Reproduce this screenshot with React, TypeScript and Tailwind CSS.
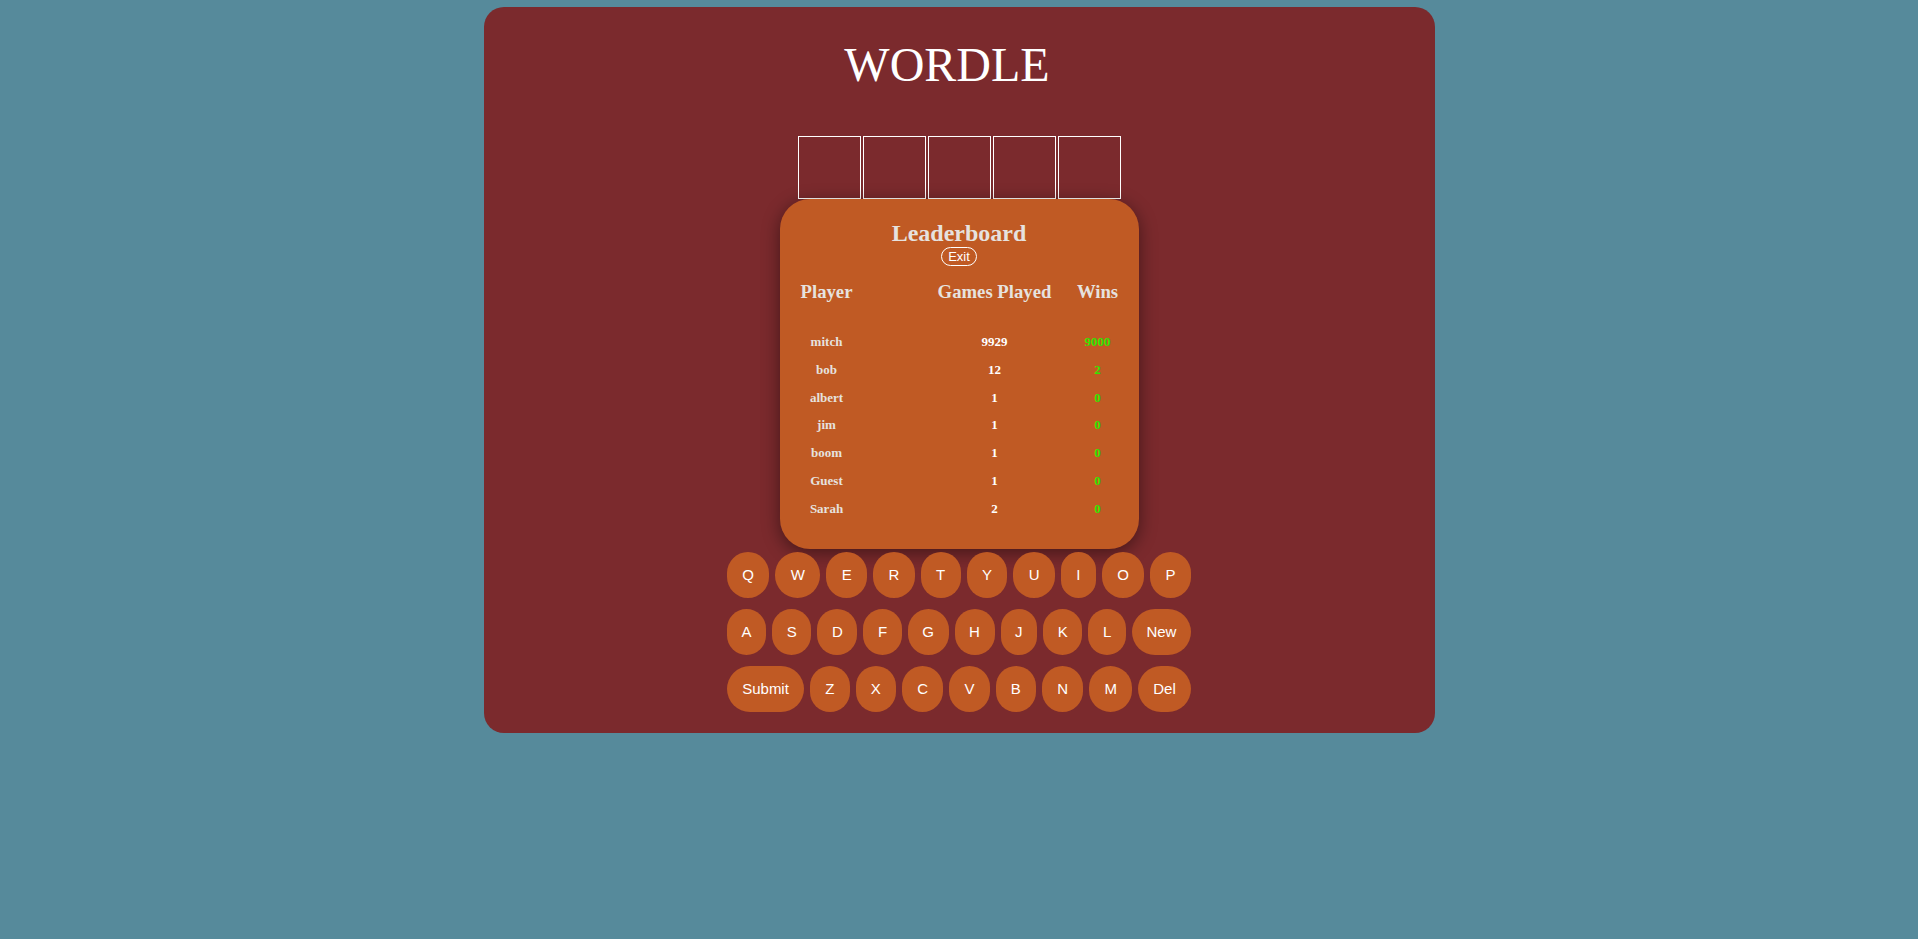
const rows = [
  { name: "mitch", games: 9929, wins: 9000 },
  { name: "bob", games: 12, wins: 2 },
  { name: "albert", games: 1, wins: 0 },
  { name: "jim", games: 1, wins: 0 },
  { name: "boom", games: 1, wins: 0 },
  { name: "Guest", games: 1, wins: 0 },
  { name: "Sarah", games: 2, wins: 0 },
];

const keyRows = [
  ["Q", "W", "E", "R", "T", "Y", "U", "I", "O", "P"],
  ["A", "S", "D", "F", "G", "H", "J", "K", "L", "New"],
  ["Submit", "Z", "X", "C", "V", "B", "N", "M", "Del"],
];

function Leaderboard() {
  return (
    <div className="w-[359px] h-[350px] rounded-[30px] bg-[#c05a24] text-[#e6e2df] shadow-[0_4px_18px_rgba(0,0,0,0.45)] font-['Liberation_Serif',serif] font-bold pt-[20px]">
      <h2 className="text-center text-[24px] leading-[28px]">Leaderboard</h2>
      <div className="flex justify-center">
        <button className="h-[19px] w-[36px] rounded-full border border-white text-white font-['Liberation_Sans',sans-serif] font-normal text-[13px] leading-[17px]">
          Exit
        </button>
      </div>
      <div className="grid grid-cols-[145px_140px_66px] mt-[15px] text-[18.72px] leading-[22px]">
        <div className="w-[94px] text-center">Player</div>
        <div className="text-center">Games Played</div>
        <div className="text-center">Wins</div>
      </div>
      <div className="mt-[31px] flex flex-col">
        {rows.map((r) => (
          <div key={r.name} className="grid grid-cols-[145px_140px_66px] h-[27.8px] text-[13px] leading-[16px]">
            <div className="w-[94px] text-center">{r.name}</div>
            <div className="text-center text-white">{r.games}</div>
            <div className="text-center text-[#2fe600]">{r.wins}</div>
          </div>
        ))}
      </div>
    </div>
  );
}

export default function App() {
  return (
    <div className="min-h-[939px] bg-[#568a9b] pt-[7px]">
      <div className="mx-auto w-[951px] h-[726px] rounded-[20px] bg-[#7b2a2d] flex flex-col items-center">
        <h1 className="mt-[32px] pr-[24px] text-white font-['Liberation_Serif',serif] text-[48px] leading-[52px]">
          WORDLE
        </h1>
        <div className="mt-[45px] flex gap-[2px]">
          {[0, 1, 2, 3, 4].map((i) => (
            <div key={i} className="w-[63px] h-[63px] border border-white" />
          ))}
        </div>
        <Leaderboard />
        <div className="mt-[3px] flex flex-col gap-[11px] w-[464px]">
          {keyRows.map((row, i) => (
            <div key={i} className="flex gap-[6px]">
              {row.map((k) => (
                <button
                  key={k}
                  className="flex-auto h-[46px] px-[14px] rounded-full bg-[#c05a24] text-white font-['Liberation_Sans',sans-serif] text-[15px]"
                >
                  {k}
                </button>
              ))}
            </div>
          ))}
        </div>
      </div>
    </div>
  );
}
